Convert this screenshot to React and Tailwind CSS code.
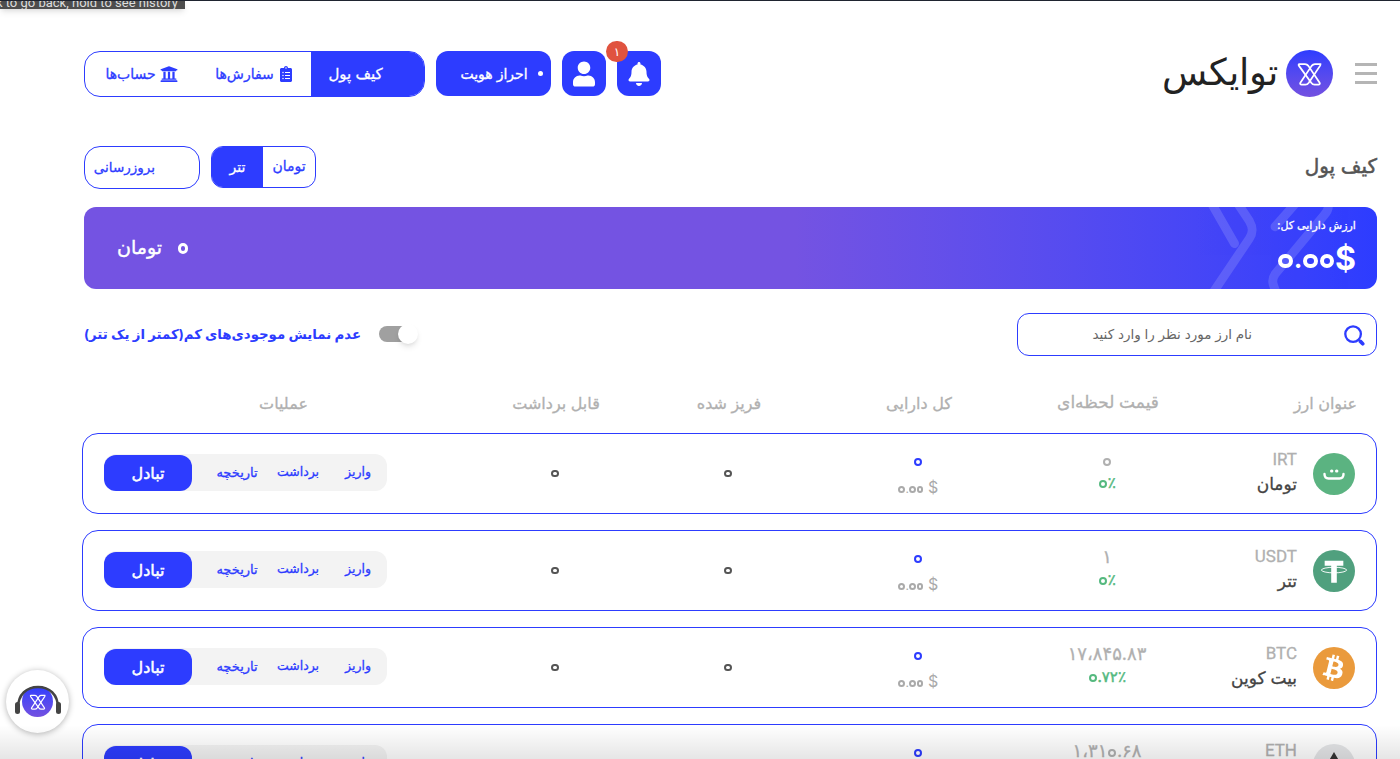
import { FaBell, FaUser, FaClipboardList, FaUniversity, FaBtc, FaEthereum } from 'react-icons/fa'

const FONT = "font-['Inter','DejaVu_Sans',sans-serif]"
// DejaVu has no medium weight, a thin stroke gets the regular cut close to it
const MED = '[-webkit-text-stroke:0.3px_currentColor]'

const COINS = [
  { code: 'IRT', name: 'تومان', price: '۰', change: '۰٪', color: 'bg-[#5bb381]', icon: 'irt' },
  { code: 'USDT', name: 'تتر', price: '۱', change: '۰٪', color: 'bg-[#50a07e]', icon: 'usdt' },
  { code: 'BTC', name: 'بیت کوین', price: '۱۷،۸۴۵.۸۳', change: '۰.۷۲٪', color: 'bg-[#ea9a3c]', icon: 'btc' },
  { code: 'ETH', name: 'اتریوم', price: '۱،۳۱۰.۶۸', change: '۰.۵۱٪', color: 'bg-[#e4e5e7]', icon: 'eth' },
]

const COLS = 'grid grid-cols-[176px_186px_192px_188px_158px_1fr] items-center'

// The zero of the original font is an open ring, the installed one has a dot
function Zero({ size = 'w-[0.55em] h-[0.55em] border-[0.17em]' }) {
  return (
    <span className={`inline-block ${size} mx-[0.04em] rounded-full border-current overflow-hidden [-webkit-text-fill-color:transparent] [-webkit-text-stroke:0]`}>
      <span className="block text-[2px] leading-[2px]">۰</span>
    </span>
  )
}

function Digits({ value, size }) {
  return <bdi dir="ltr">{[...value].map((c, i) => (c === '۰' ? <Zero key={i} size={size} /> : c))}</bdi>
}

function XMark({ className }) {
  return (
    <svg className={className} viewBox="0 0 24 24" fill="none" stroke="currentColor" strokeWidth="1.4" strokeLinejoin="round">
      <path d="M3.500 4h4.500c1.200 0 2 .5 2.700 1.500l9 13.500c.5.8 0 1.500-1 1.500h-3c-1.200 0-2-.5-2.700-1.500L3.200 5.500C2.700 4.700 2.800 4 3.500 4z" />
      <path d="M20.500 4H16c-1.200 0-2 .5-2.700 1.500l-9 13.500c-.5.8 0 1.500 1 1.500h3c1.200 0 2-.5 2.700-1.500l9-13.500c.5-.8.4-1.500-.5-1.500z" />
    </svg>
  )
}

function CoinIcon({ type }) {
  if (type === 'irt') {
    return (
      <svg className="w-6 h-6 text-white" viewBox="0 0 24 24" fill="none" stroke="currentColor" strokeWidth="2.400" strokeLinecap="round">
        <path d="M2.500 12c0 3 1.500 4.500 4 4.500h11c2.500 0 4-1.500 4-4.500" />
        <path d="M9.500 9h.4M14.500 9h.4" strokeWidth="3" />
      </svg>
    )
  }
  if (type === 'usdt') {
    return (
      <svg className="w-[28px] h-[28px] text-white" viewBox="0 0 30 30" fill="none">
        <path d="M5 4h20v5.500h-7v18h-6v-18H5z" fill="currentColor" />
        <ellipse cx="15" cy="14" rx="13.500" ry="3" stroke="currentColor" strokeWidth="1" />
      </svg>
    )
  }
  if (type === 'btc') return <FaBtc className="w-[26px] h-[26px] text-white rotate-[14deg]" />
  return <FaEthereum className="w-[26px] h-[26px] text-[#333]" />
}

function CoinRow({ coin }) {
  return (
    <div className={`${COLS} h-[81px] -ml-0.5 border border-[#2d3cff] rounded-2xl bg-white shrink-0`}>
      <div className="flex items-center gap-4 pr-[21px]">
        <div className={`w-[42px] h-[42px] rounded-full flex items-center justify-center ${coin.color}`}>
          <CoinIcon type={coin.icon} />
        </div>
        <div className={`flex flex-col gap-[5px] pb-1 ${MED}`}>
          <span className="text-[17px] leading-5 text-[#b0b0b0] font-['Roboto',sans-serif]">{coin.code}</span>
          <span className="text-[17px] leading-5 text-[#444]">{coin.name}</span>
        </div>
      </div>
      <div className={`flex flex-col items-center gap-[3px] pb-1 ${MED}`}>
        <span className="text-[18px] leading-5 text-[#b0b0b0]"><Digits value={coin.price} size="w-[0.45em] h-[0.45em] border-[0.12em]" /></span>
        <span className="text-[15px] leading-5 text-[#55b97f] [-webkit-text-stroke:0.5px_currentColor]"><Digits value={coin.change} /></span>
      </div>
      <div className="flex flex-col items-center gap-[6px] pt-[3px]">
        <span className="text-sm leading-5 font-bold text-[#2d3cff]"><Zero /></span>
        <span className="flex items-baseline gap-1 text-xs leading-5 text-[#aaa]">
          <span className="text-base leading-5">$</span>
          <Digits value="۰.۰۰" />
        </span>
      </div>
      <div className="text-center text-[13px] font-bold text-[#555] pb-0.5"><Zero /></div>
      <div className="text-center text-[13px] font-bold text-[#555] pb-0.5"><Zero /></div>
      <div className="flex justify-end pl-[21px] pb-0.5">
        <div className={`flex items-center w-[283px] h-[37px] rounded-xl bg-[#f3f3f3] text-[12.500px] text-[#2d3cff] ${MED}`}>
          <span className="w-[58px] text-center">واریز</span>
          <span className="w-[62px] text-center">برداشت</span>
          <span className="w-[60px] text-center text-[13px]">تاریخچه</span>
          <span className="w-[88px] mr-auto h-[36px] rounded-xl bg-[#2d3cff] text-white text-base flex items-center justify-center [-webkit-text-stroke:0.5px_currentColor]">تبادل</span>
        </div>
      </div>
    </div>
  )
}

export default function App() {
  return (
    <div dir="rtl" className={`${FONT} relative h-[759px] overflow-hidden bg-white border-t border-[#1f2430]`}>
      {/* Browser back tooltip */}
      <div dir="ltr" className="absolute -top-px left-0 w-[185px] h-[9px] flex justify-end pr-[7px] bg-[#4d4d4d] shadow-md overflow-hidden text-[13px] leading-[6px] text-[#ddd] whitespace-nowrap font-['Roboto',sans-serif] z-20">
        <span className="shrink-0">Click to go back, hold to see history</span>
      </div>

      <div className="pr-[23px] pl-[84px]">
        {/* Header */}
        <header className="flex items-center justify-between pt-[49px] h-[96px]">
          <div className="flex items-center">
            <div className="flex flex-col gap-[6px] w-[22px]">
              <span className="h-[3px] bg-[#b5b5b5]" />
              <span className="h-[3px] bg-[#b5b5b5]" />
              <span className="h-[3px] bg-[#b5b5b5]" />
            </div>
            <div className="mr-[22px] w-[47px] h-[47px] rounded-full bg-gradient-to-b from-[#2d3cff] to-[#7350e0] flex items-center justify-center">
              <XMark className="w-[30px] h-[30px] text-white" />
            </div>
            <span className="mr-2 pb-1 text-[37px] leading-[40px] font-light text-[#222]">توایکس</span>
          </div>

          <div className="flex items-center gap-[11px]">
            <div className="flex items-center gap-[11px]">
              <button className="relative w-[44px] h-[45px] rounded-xl bg-[#2d3cff] flex items-center justify-center">
                <FaBell className="w-6 h-6 text-white" />
                <span className="absolute -top-2.5 right-[33px] w-[22px] h-[21px] rounded-full bg-[#e0533f] text-white text-xs flex items-center justify-center">۱</span>
              </button>
              <button className="w-[44px] h-[45px] rounded-xl bg-[#2d3cff] flex items-center justify-center">
                <FaUser className="w-[22px] h-[26px] text-white" />
              </button>
              <button className={`w-[115px] h-[45px] rounded-xl bg-[#2d3cff] text-white text-sm flex items-center justify-center gap-[10px] pl-4 ${MED}`}>
                <span className="w-[5px] h-[5px] rounded-full bg-white" />
                احراز هویت
              </button>
            </div>
            <nav className={`flex w-[341px] h-[46px] rounded-2xl border border-[#2d3cff] text-sm text-[#2d3cff] overflow-hidden ${MED}`}>
              <a className="w-[113px] bg-[#2d3cff] text-white text-[15px] flex items-center justify-center pr-6">کیف پول</a>
              <a className="w-[113px] flex items-center justify-center gap-1"><FaClipboardList className="w-4 h-4" />سفارش‌ها</a>
              <a className="flex-1 flex items-center justify-center gap-1"><FaUniversity className="w-[18px] h-[18px]" />حساب‌ها</a>
            </nav>
          </div>
        </header>

        {/* Title row */}
        <div className="flex items-center justify-between mt-[49px] h-[43px]">
          <h1 className="pb-1 text-xl text-[#555] [-webkit-text-stroke:0.5px_currentColor]">کیف پول</h1>
          <div className="flex items-start gap-[11px]">
            <div className={`flex w-[105px] h-[42px] rounded-xl border border-[#2d3cff] overflow-hidden text-sm pb-0.5 ${MED}`}>
              <span className="w-[52px] flex items-center justify-center text-[#2d3cff]">تومان</span>
              <span className="flex-1 flex items-center justify-center bg-[#2d3cff] text-white -mb-0.5">تتر</span>
            </div>
            <button className={`w-[116px] h-[43px] rounded-2xl border border-[#2d3cff] text-[13.500px] text-[#2d3cff] text-right pr-[44px] whitespace-nowrap ${MED}`}>بروزرسانی</button>
          </div>
        </div>

        {/* Total value banner */}
        <section className="relative mt-[18px] h-[82px] rounded-xl overflow-hidden bg-gradient-to-l from-[#2d3cff] to-[#7453e2] to-45% text-white flex items-center justify-between pl-[33px] pr-[21px]">
          <svg className="absolute top-0 right-[32px] h-[82px] w-[140px] text-white opacity-[0.14]" viewBox="0 0 140 83" fill="none" stroke="currentColor" strokeWidth="9" strokeLinecap="round">
            <path d="M5 -5l24 42" />
            <path d="M28 -10l16 24c4 7 4 12 0 18L5 90" />
            <path d="M70 20l22-25" />
            <path d="M122 -10c3 8 3 12-2 18L70 68c-4 6-3 10 4 24" />
          </svg>
          <div className="relative flex flex-col items-end gap-1.5 pb-1">
            <span className={`text-[11px] leading-5 ${MED}`}>ارزش دارایی کل:</span>
            <span className="flex items-center h-9 text-[26px] font-bold leading-9">
              <span className="text-[32px] leading-9">$</span>
              <Digits value="۰.۰۰" />
            </span>
          </div>
          <div className="relative flex items-center gap-[15px] text-[19px] [-webkit-text-stroke:0.4px_currentColor]">
            <span className="font-bold"><Zero /></span>
            <span>تومان</span>
          </div>
        </section>

        {/* Search and filter */}
        <div className="flex items-center justify-between mt-6">
          <div className="flex items-center w-[360px] h-[43px] rounded-xl border border-[#2d3cff] px-[11px]">
            <svg className="w-[22px] h-[22px] shrink-0 text-[#2d3cff]" viewBox="0 0 24 24" fill="none" stroke="currentColor" strokeWidth="2.500" strokeLinecap="round">
              <circle cx="11" cy="11" r="8.500" />
              <path d="M19 19l2.500 2.500" strokeWidth="4" />
            </svg>
            <span className="mr-[91px] text-[13.500px] text-[#666] whitespace-nowrap">نام ارز مورد نظر را وارد کنید</span>
          </div>
          <div className="flex items-center gap-[18px]">
            <span className="relative block w-[39px] h-[16px]">
              <span className="absolute inset-y-0 left-0 w-[34px] rounded-full bg-[#a0a0a0]" />
              <span className="absolute -top-[2px] right-0 w-[20px] h-[20px] rounded-full bg-white shadow-md" />
            </span>
            <span className="text-[13.350px] font-bold text-[#2d3cff]">عدم نمایش موجودی‌های کم(کمتر از یک تتر)</span>
          </div>
        </div>

        {/* Table head */}
        <div className={`${COLS} mt-[34px] h-[24px] text-base text-[#b0b0b0] ${MED}`}>
          <span className="pr-5">عنوان ارز</span>
          <span className="text-center text-[17px]">قیمت لحظه‌ای</span>
          <span className="text-center">کل دارایی</span>
          <span className="text-center">فریز شده</span>
          <span className="text-center">قابل برداشت</span>
          <span className="text-center pl-1.5">عملیات</span>
        </div>

        {/* Coin rows */}
        <div className="mt-[19px] flex flex-col gap-4">
          {COINS.map((coin) => <CoinRow key={coin.code} coin={coin} />)}
        </div>
      </div>

      {/* Support widget */}
      <button className="absolute left-[6px] bottom-[26px] z-10 w-[63px] h-[63px] rounded-full bg-white shadow-[0_1px_6px_rgba(0,0,0,0.3)] flex items-center justify-center">
        <svg className="absolute w-[48px] h-[36px] text-[#444]" viewBox="0 0 48 36" fill="none">
          <path d="M4 24C4 10 13 3 24 3s20 7 20 21" stroke="currentColor" strokeWidth="2.500" />
          <rect x="1" y="18" width="5" height="12" rx="2.500" fill="currentColor" />
          <rect x="42" y="18" width="5" height="12" rx="2.500" fill="currentColor" />
        </svg>
        <span className="w-[31px] h-[31px] rounded-full bg-gradient-to-b from-[#2d3cff] to-[#7350e0] flex items-center justify-center">
          <XMark className="w-5 h-5 text-white" />
        </span>
      </button>

      {/* Bottom fade */}
      <div className="absolute bottom-0 inset-x-0 h-[34px] bg-gradient-to-b from-transparent to-black/10 pointer-events-none z-20" />
    </div>
  )
}
